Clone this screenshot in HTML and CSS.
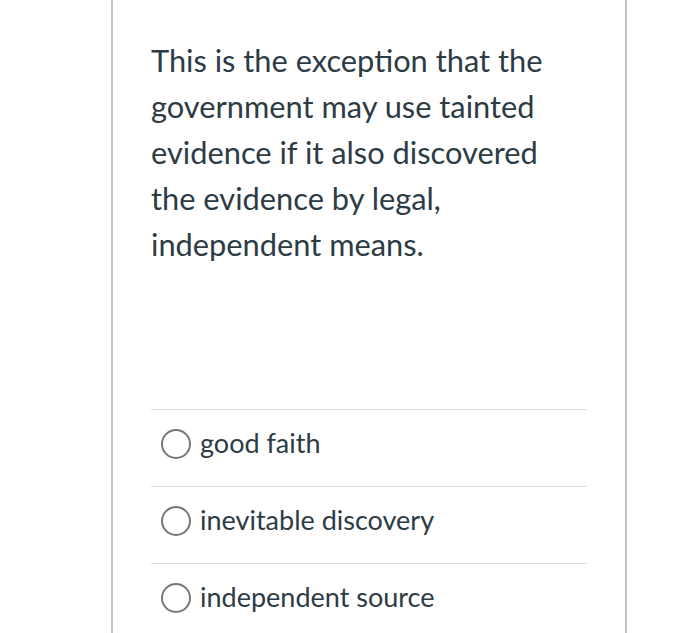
FILE: index.html
```html
<!DOCTYPE html>
<html>
<head>
<meta charset="utf-8">
<link rel="stylesheet" href="styles.css">
</head>
<body>
<div class="card">
  <div class="question">This is the exception that the government may use tainted evidence if it also discovered the evidence by legal, independent means.</div>
  <div class="answers">
    <label class="answer"><span class="radio"></span><span class="label">good faith</span></label>
    <label class="answer"><span class="radio"></span><span class="label">inevitable discovery</span></label>
    <label class="answer"><span class="radio"></span><span class="label">independent source</span></label>
  </div>
</div>
</body>
</html>
```

FILE: styles.css
```css
html, body {
  margin: 0;
  padding: 0;
  background: #ffffff;
}
body {
  font-family: Lato, "Liberation Sans", sans-serif;
  color: #2d3b45;
  height: 633px;
  overflow: hidden;
}
.card {
  margin-left: 111px;
  width: 436px;
  height: 595px;
  border-left: 2px solid #c4c4c4;
  border-right: 2px solid #c4c4c4;
  padding: 38px 38px 0 38px;
  box-sizing: content-box;
  overflow: hidden;
}
.question {
  font-size: 30.8px;
  line-height: 46px;
  width: 400px;
}
.answers {
  margin-top: 141px;
}
.answer {
  display: flex;
  align-items: center;
  height: 76px;
  border-top: 1px solid #dcdcdc;
  padding-left: 10px;
  font-size: 27px;
}
.radio {
  width: 26px;
  height: 26px;
  border: 2px solid #777777;
  border-radius: 50%;
  margin-right: 9px;
  flex: none;
  position: relative;
  top: -4px;
}
.label {
  position: relative;
  top: -6px;
}
```
